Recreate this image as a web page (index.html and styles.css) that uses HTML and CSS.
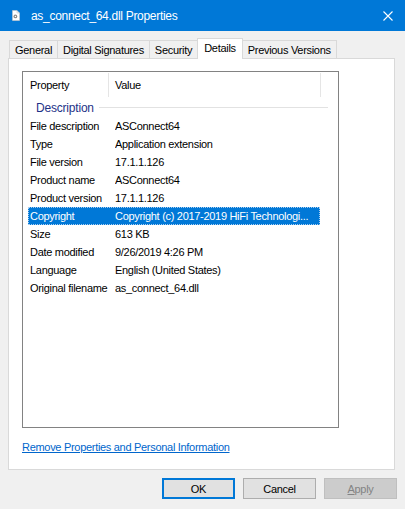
FILE: index.html
```html
<!DOCTYPE html>
<html lang="en">
<head>
    <meta charset="UTF-8">
    <meta name="viewport" content="width=device-width, initial-scale=1.0">
    <title>as_connect_64.dll Properties</title>
    <link rel="stylesheet" href="styles.css">
</head>
<body>
    <div class="titlebar">
        <svg class="app-icon" viewBox="0 0 8 11">
            <path d="M0.5 0.5 H5 L7.5 3 V10.5 H0.5 Z" fill="#fff" stroke="#c8c8c8" stroke-width="0.6"/>
            <path d="M5 0.5 V3 H7.5" fill="none" stroke="#c8c8c8" stroke-width="0.6"/>
            <circle cx="3.4" cy="6.4" r="1.9" fill="#8c8c8c"/>
            <circle cx="3.4" cy="6.4" r="0.7" fill="#fff"/>
        </svg>
        <span class="title">as_connect_64.dll Properties</span>
        <span class="close">
            <svg viewBox="0 0 10 10"><path d="M0.5 0.5 L9.5 9.5 M9.5 0.5 L0.5 9.5" stroke="#fff" stroke-width="1.1"/></svg>
        </span>
    </div>

    <div class="dialog">
        <div class="tabs">
            <div class="tab">General</div>
            <div class="tab">Digital Signatures</div>
            <div class="tab">Security</div>
            <div class="tab active">Details</div>
            <div class="tab">Previous Versions</div>
        </div>

        <div class="panel">
            <div class="listbox">
                <div class="list-header">
                    <div class="col-head col-prop">Property</div>
                    <div class="col-head col-value">Value</div>
                </div>
                <div class="group">
                    <span class="group-name">Description</span>
                    <span class="group-line"></span>
                </div>
                <div class="row"><span class="prop">File description</span><span class="value">ASConnect64</span></div>
                <div class="row"><span class="prop">Type</span><span class="value">Application extension</span></div>
                <div class="row"><span class="prop">File version</span><span class="value">17.1.1.126</span></div>
                <div class="row"><span class="prop">Product name</span><span class="value">ASConnect64</span></div>
                <div class="row"><span class="prop">Product version</span><span class="value">17.1.1.126</span></div>
                <div class="row selected"><span class="prop">Copyright</span><span class="value">Copyright (c) 2017-2019 HiFi Technologi...</span></div>
                <div class="row"><span class="prop">Size</span><span class="value">613 KB</span></div>
                <div class="row"><span class="prop">Date modified</span><span class="value">9/26/2019 4:26 PM</span></div>
                <div class="row"><span class="prop">Language</span><span class="value">English (United States)</span></div>
                <div class="row"><span class="prop">Original filename</span><span class="value">as_connect_64.dll</span></div>
            </div>
            <a class="link" href="#">Remove Properties and Personal Information</a>
        </div>

        <div class="buttons">
            <button class="btn default">OK</button>
            <button class="btn">Cancel</button>
            <button class="btn" disabled><u>A</u>pply</button>
        </div>
    </div>
</body>
</html>
```

FILE: styles.css
```css
body {
    margin: 0;
    width: 405px;
    height: 509px;
    overflow: hidden;
    background-color: #f0f0f0;
    font-family: "Liberation Sans", Arial, sans-serif;
    font-size: 11px;
    letter-spacing: -0.3px;
    color: #000;
}

.titlebar {
    height: 31px;
    background-color: #0078d7;
    color: white;
    display: flex;
    align-items: center;
    padding-left: 12px;
}

.app-icon {
    width: 8px;
    height: 11px;
    margin-right: 11px;
}

.title {
    font-size: 12px;
}

.close {
    margin-left: auto;
    width: 34px;
    height: 31px;
    display: flex;
    align-items: center;
    justify-content: center;
}

.close svg {
    width: 10px;
    height: 10px;
}

.dialog {
    padding: 0 10px 0 8px;
}

/* tabs */
.tabs {
    display: flex;
    align-items: flex-end;
    height: 27px;
    padding-left: 2px;
}

.tab {
    height: 17px;
    line-height: 18px;
    padding: 0 5px;
    margin-left: -1px;
    border: 1px solid #d9d9d9;
    border-bottom: none;
    background-color: #f0f0f0;
}

.tab.active {
    position: relative;
    z-index: 1;
    height: 20px;
    line-height: 18px;
    margin-bottom: -1px;
    padding: 0 6px;
    background-color: white;
}

.panel {
    box-sizing: border-box;
    height: 412px;
    padding: 12px 0 0 13px;
    background-color: white;
    border: 1px solid #d9d9d9;
}

/* details list */
.listbox {
    box-sizing: border-box;
    width: 317px;
    height: 357px;
    border: 1px solid #828282;
}

.list-header {
    display: flex;
    height: 26px;
}

.col-head {
    display: flex;
    align-items: center;
    margin-top: 1px;
    height: 24px;
    border-right: 1px solid #e5e5e5;
}

.col-prop {
    width: 78px;
    padding-left: 7px;
}

.col-value {
    width: 205px;
    padding-left: 6px;
}

.group {
    display: flex;
    align-items: center;
    height: 19px;
    padding: 0 10px 0 13px;
    gap: 5px;
}

.group-name {
    font-size: 12px;
    letter-spacing: -0.2px;
    color: #1e3287;
}

.group-line {
    flex: 1;
    height: 1px;
    background-color: #e2e2e2;
}

.row {
    display: flex;
    align-items: center;
    height: 18px;
    width: 292px;
    margin-left: 5px;
    white-space: nowrap;
}

.prop {
    width: 85px;
    padding-left: 2px;
}

.value {
    flex: 1;
    overflow: hidden;
    text-overflow: ellipsis;
}

.row.selected {
    background-color: #0078d7;
    color: white;
    outline: 1px dotted #a9cff2;
    outline-offset: -1px;
}

.link {
    display: inline-block;
    margin-top: 12px;
    line-height: 14px;
    color: #0066cc;
    text-decoration: underline;
}

/* dialog buttons */
.buttons {
    display: flex;
    justify-content: flex-end;
    gap: 8px;
    margin: 8px -2px 0 0;
}

.btn {
    box-sizing: border-box;
    width: 73px;
    height: 21px;
    padding: 0;
    border: 1px solid #adadad;
    background-color: #e1e1e1;
    font-family: inherit;
    font-size: 11px;
    letter-spacing: -0.3px;
    color: #000;
}

.btn.default {
    border-color: #0078d7;
    box-shadow: inset 0 0 0 1px #0078d7;
}

.btn:disabled {
    background-color: #cccccc;
    border-color: #bfbfbf;
    color: #838383;
}
```
